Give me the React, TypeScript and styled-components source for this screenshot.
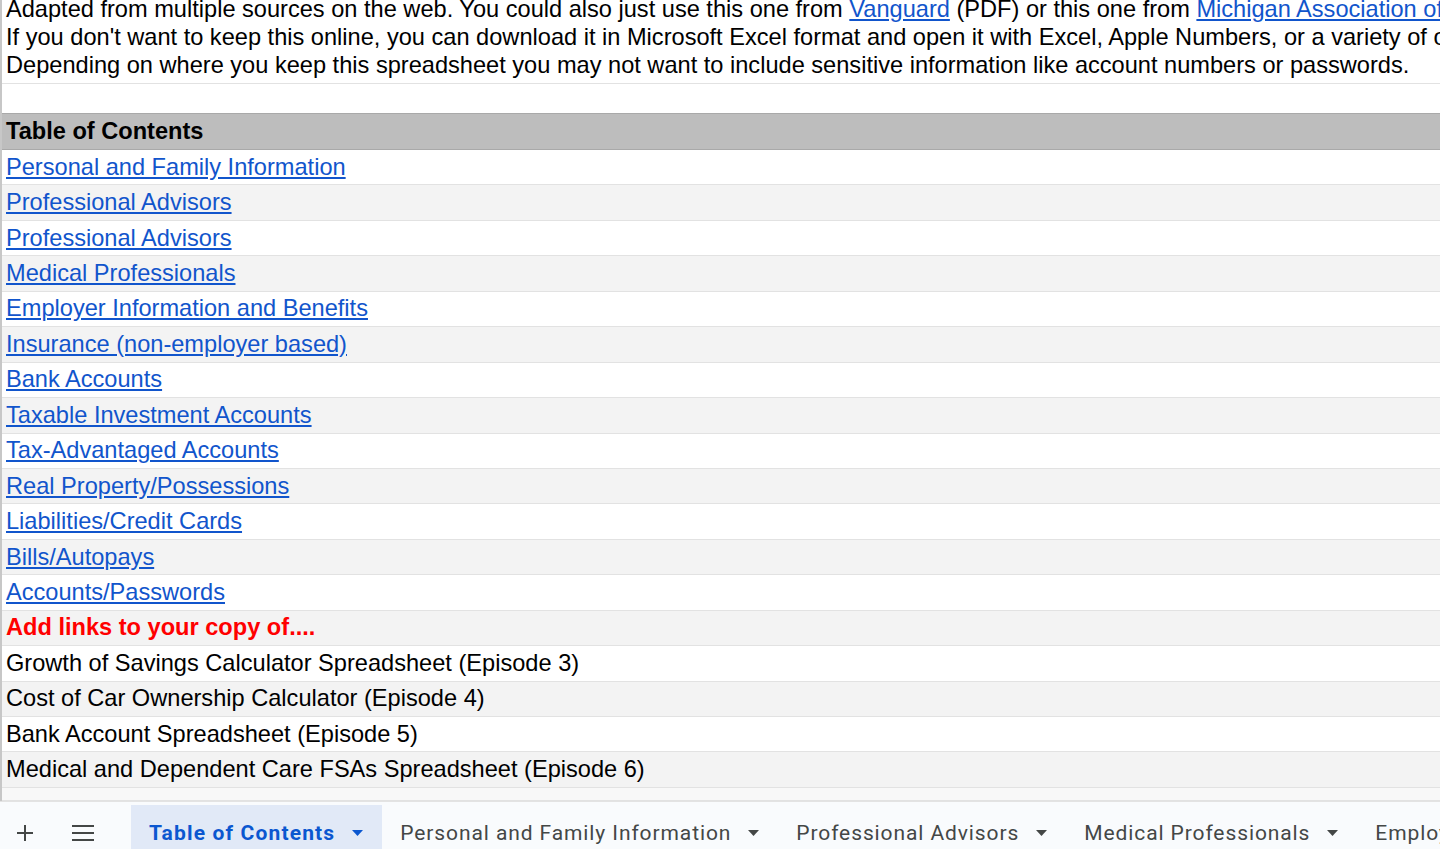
import styled, { createGlobalStyle } from "styled-components";

const GlobalStyle = createGlobalStyle`
  html, body {
    margin: 0;
    padding: 0;
    background: #ffffff;
    overflow: hidden;
  }
  body {
    font-family: "Liberation Sans", Arial, sans-serif;
  }
`;

const contents = [
  "Personal and Family Information",
  "Professional Advisors",
  "Professional Advisors",
  "Medical Professionals",
  "Employer Information and Benefits",
  "Insurance (non-employer based)",
  "Bank Accounts",
  "Taxable Investment Accounts",
  "Tax-Advantaged Accounts",
  "Real Property/Possessions",
  "Liabilities/Credit Cards",
  "Bills/Autopays",
  "Accounts/Passwords",
];

const copies = [
  "Growth of Savings Calculator Spreadsheet (Episode 3)",
  "Cost of Car Ownership Calculator (Episode 4)",
  "Bank Account Spreadsheet (Episode 5)",
  "Medical and Dependent Care FSAs Spreadsheet (Episode 6)",
];

const tabs = [
  "Table of Contents",
  "Personal and Family Information",
  "Professional Advisors",
  "Medical Professionals",
  "Employer Information and Benefits",
];

function Caret() {
  return (
    <svg width="11" height="6" viewBox="0 0 11 6">
      <path d="M0 0h11L5.5 6z" fill="currentColor" />
    </svg>
  );
}

function App() {
  return (
    <Page>
      <GlobalStyle />
      <Sheet>
        <IntroRow>
          <div>
            Adapted from multiple sources on the web. You could also just use
            this one from <Link>Vanguard</Link> (PDF) or this one from{" "}
            <Link>Michigan Association of CPAs</Link> (PDF).
          </div>
          <div>
            If you don't want to keep this online, you can download it in
            Microsoft Excel format and open it with Excel, Apple Numbers, or a
            variety of other spreadsheet programs.
          </div>
          <div>
            Depending on where you keep this spreadsheet you may not want to
            include sensitive information like account numbers or passwords.
          </div>
        </IntroRow>
        <BlankRow />
        <HeaderRow>Table of Contents</HeaderRow>
        {contents.map((label, i) => (
          <Row key={i} $shade={i % 2 === 1}>
            <Link>{label}</Link>
          </Row>
        ))}
        <Row $shade>
          <Warning>Add links to your copy of....</Warning>
        </Row>
        {copies.map((label, i) => (
          <Row key={label} $shade={i % 2 === 1}>
            {label}
          </Row>
        ))}
        <FillerRow />
      </Sheet>
      <TabBar>
        <IconButton $width={50}>
          <svg width="18" height="18" viewBox="0 0 18 18">
            <path
              d="M9 1v16M1 9h16"
              stroke="#444746"
              strokeWidth="2"
              fill="none"
            />
          </svg>
        </IconButton>
        <IconButton $width={66}>
          <svg width="22" height="16" viewBox="0 0 22 16">
            <path
              d="M0 1h22M0 8h22M0 15h22"
              stroke="#444746"
              strokeWidth="2"
              fill="none"
            />
          </svg>
        </IconButton>
        <Tabs>
          {tabs.map((t, i) => (
            <Tab key={t} $active={i === 0}>
              {t}
              <Caret />
            </Tab>
          ))}
        </Tabs>
      </TabBar>
    </Page>
  );
}
export default App;

const Page = styled.div`
  width: 1440px;
  height: 849px;
  display: flex;
  flex-direction: column;
  overflow: hidden;
`;

const Sheet = styled.div`
  flex: 1;
  display: flex;
  flex-direction: column;
  border-left: 2px solid #c7c7c7;
  overflow: hidden;
  font-size: 23.6px;
  color: #000;
`;

const IntroRow = styled.div`
  height: 84px;
  flex-shrink: 0;
  box-sizing: border-box;
  display: flex;
  flex-direction: column;
  justify-content: flex-end;
  padding: 0 0 4px 4px;
  line-height: 28px;
  white-space: nowrap;
  border-bottom: 1px solid #e2e2e2;
`;

const BlankRow = styled.div`
  height: 29px;
  flex-shrink: 0;
`;

const HeaderRow = styled.div`
  height: 37px;
  flex-shrink: 0;
  box-sizing: border-box;
  display: flex;
  align-items: center;
  padding-left: 4px;
  background: #bdbdbd;
  border-top: 1px solid #a9a9a9;
  border-bottom: 1px solid #a9a9a9;
  font-weight: 700;
`;

const Row = styled.div<{ $shade?: boolean }>`
  height: 35.45px;
  flex-shrink: 0;
  box-sizing: border-box;
  display: flex;
  align-items: center;
  padding-left: 4px;
  white-space: nowrap;
  background: ${(p) => (p.$shade ? "#f3f3f3" : "#ffffff")};
  border-bottom: 1px solid #e2e2e2;
`;

const FillerRow = styled.div`
  flex: 1;
  background: #f8f8f8;
  border-bottom: 1px solid #e2e2e2;
`;

const Link = styled.span`
  color: #1155cc;
  text-decoration: underline;
  text-underline-offset: 2px;
`;

const Warning = styled.span`
  color: #ff0000;
  font-weight: 700;
`;

const TabBar = styled.div`
  height: 47px;
  flex-shrink: 0;
  display: flex;
  align-items: flex-end;
  background: #f9fbfd;
  border-top: 1px solid #e3e3e3;
  font-family: Roboto, "Open Sans", sans-serif;
  overflow: hidden;
`;

const IconButton = styled.div<{ $width: number }>`
  width: ${(p) => p.$width}px;
  flex-shrink: 0;
  height: 44px;
  box-sizing: border-box;
  padding-top: 12px;
  display: flex;
  align-items: center;
  justify-content: center;
`;

const Tabs = styled.div`
  display: flex;
  flex-shrink: 0;
  margin-left: 15px;
  white-space: nowrap;
`;

const Tab = styled.div<{ $active?: boolean }>`
  height: 44px;
  box-sizing: border-box;
  padding: 12px 19px 0 18px;
  display: flex;
  align-items: center;
  gap: 17px;
  font-size: 21px;
  letter-spacing: ${(p) => (p.$active ? "1.15px" : "0.9px")};
  font-weight: ${(p) => (p.$active ? 700 : 400)};
  color: ${(p) => (p.$active ? "#0b57d0" : "#444746")};
  background: ${(p) => (p.$active ? "#e1e9f7" : "transparent")};
`;
